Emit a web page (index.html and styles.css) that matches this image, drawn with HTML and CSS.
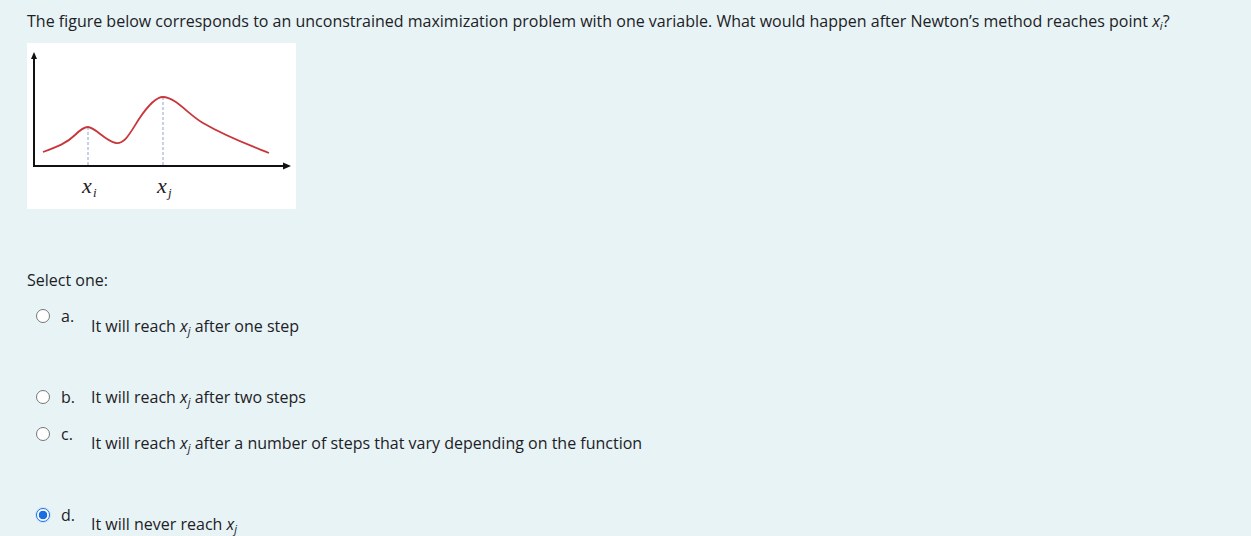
FILE: index.html
```html
<!DOCTYPE html>
<html>
<head>
<meta charset="utf-8">
<link rel="stylesheet" href="styles.css">
</head>
<body>
<div class="question">
  <p class="qtext">The figure below corresponds to an unconstrained maximization problem with one variable. What would happen after Newton’s method reaches point <i class="var">x<sub>i</sub></i>?</p>
  <div class="figure">
    <svg width="269" height="166" viewBox="0 0 269 166" xmlns="http://www.w3.org/2000/svg">
      <line x1="61" y1="84" x2="61" y2="123" stroke="#8aa6c8" stroke-width="1" stroke-dasharray="3,2"/>
      <line x1="136" y1="54" x2="136" y2="123" stroke="#8aa6c8" stroke-width="1" stroke-dasharray="3,2"/>
      <line x1="7" y1="123" x2="7" y2="14" stroke="#111" stroke-width="2"/>
      <polygon points="7,9 4,16 10,16" fill="#111"/>
      <line x1="6" y1="123" x2="257" y2="123" stroke="#111" stroke-width="2"/>
      <polygon points="264,123 256,119.5 256,126.5" fill="#111"/>
      <path d="M16,109 C30,104 40,100 48,92 C54,86 58,84 61,84 C68,84 78,98 89,100 C98,101 103,90 112,76 C120,64 128,54 136,54 C148,54 162,72 176,80 C200,94 222,102 242,110" fill="none" stroke="#c9363a" stroke-width="1.8"/>
      <text x="55" y="150" class="lbl">x</text><text x="66" y="154" class="sub">i</text>
      <text x="130" y="150" class="lbl">x</text><text x="141" y="154" class="sub">j</text>
    </svg>
  </div>
  <p class="prompt">Select one:</p>
  <div class="answers">
    <div class="opt opt-a">
      <span class="radio"></span><span class="letter">a.</span>
      <span class="text">It will reach <i class="var">x<sub>j</sub></i> after one step</span>
    </div>
    <div class="opt opt-b">
      <span class="radio"></span><span class="letter">b.</span>
      <span class="text">It will reach <i class="var">x<sub>j</sub></i> after two steps</span>
    </div>
    <div class="opt opt-c">
      <span class="radio"></span><span class="letter">c.</span>
      <span class="text">It will reach <i class="var">x<sub>j</sub></i> after a number of steps that vary depending on the function</span>
    </div>
    <div class="opt opt-d">
      <span class="radio checked"></span><span class="letter">d.</span>
      <span class="text">It will never reach <i class="var">x<sub>j</sub></i></span>
    </div>
  </div>
</div>
</body>
</html>
```
FILE: styles.css
```css
html, body {
  margin: 0;
  padding: 0;
  background: #e7f3f5;
}
body {
  font-family: "Open Sans", "Noto Sans", sans-serif;
  font-size: 16px;
  color: #1d2125;
}
.question {
  padding: 9px 27px 0 27px;
}
.qtext {
  margin: 0;
  line-height: 24px;
}
.var {
  font-style: italic;
}
.var sub {
  font-size: 11px;
  vertical-align: -3px;
  line-height: 0;
}
.figure {
  margin-top: 10px;
  width: 269px;
  height: 166px;
  background: #fff;
}
.figure svg {
  display: block;
}
.lbl {
  font-family: "Liberation Serif", "Times New Roman", serif;
  font-style: italic;
  font-size: 22px;
  fill: #222;
}
.sub {
  font-family: "Liberation Serif", "Times New Roman", serif;
  font-style: italic;
  font-size: 13px;
  fill: #222;
}
.prompt {
  margin: 59px 0 0 0;
  line-height: 24px;
}
.answers {
  padding-left: 9px;
}
.opt {
  display: flex;
  align-items: flex-start;
  line-height: 24px;
}
.radio {
  width: 12px;
  height: 12px;
  border: 1px solid #767676;
  border-radius: 50%;
  background: #fff;
  margin-top: 5px;
  flex: none;
}
.radio.checked {
  border-color: #1a6fe0;
  background: radial-gradient(circle, #1a6fe0 0 4px, #fff 4.6px);
  box-shadow: 0 0 0 1px #cfe0f7;
}
.letter {
  flex: none;
  box-sizing: border-box;
  width: 41px;
  padding-left: 11px;
}
.opt-a { margin-top: 12px; }
.opt-a .text { padding-top: 10px; }
.opt-b { margin-top: 47px; }
.opt-c { margin-top: 13px; }
.opt-c .text { padding-top: 9px; }
.opt-d { margin-top: 48px; }
.opt-d .text { padding-top: 9px; }
```
